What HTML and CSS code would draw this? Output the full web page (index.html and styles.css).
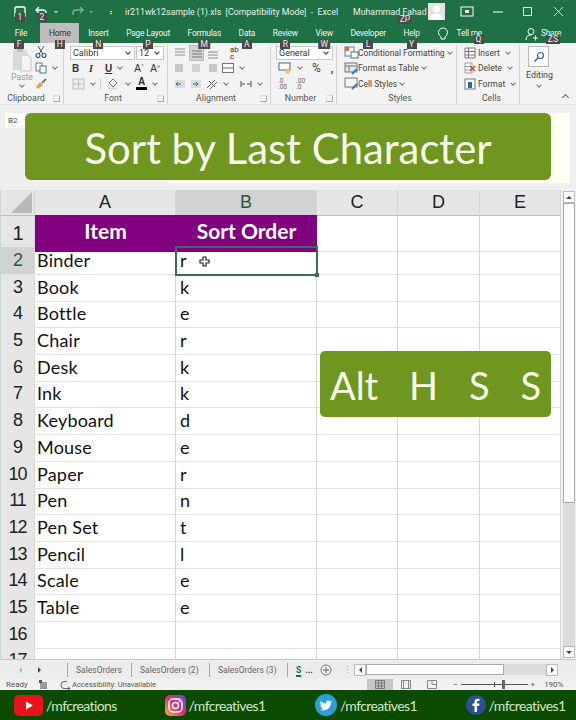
FILE: index.html
```html
<!DOCTYPE html>
<html lang="en">
<head>
  <meta charset="UTF-8" />
  <title>Sort by Last Character</title>
  <link rel="stylesheet" href="styles.css">
</head>
<body>

  <!-- title bar -->
  <div class="titlebar">
    <div class="qat">
      <span class="qat-btn"><svg width="14" height="14" viewBox="0 0 14 14"><path d="M2 12V3q0-1 1-1h8q1 0 1 1v9" fill="none" stroke="#fff" stroke-width="1.3"/></svg><i class="kt">1</i></span>
      <span class="qat-btn"><svg width="16" height="14" viewBox="0 0 16 14"><path d="M2 5h7q3 0 3 3v2M5 2L2 5l3 3" fill="none" stroke="#fff" stroke-width="1.4"/></svg><i class="kt">2</i></span>
      <span class="caret-w"></span>
      <span class="qat-btn dim"><svg width="16" height="14" viewBox="0 0 16 14"><path d="M14 5H7Q4 5 4 8v2M11 2l3 3-3 3" fill="none" stroke="#7fb096" stroke-width="1.4"/></svg></span>
      <span class="caret-w dim"></span>
      <span class="qat-more"></span>
    </div>
    <div class="doc-title">ir211wk12sample (1).xls&nbsp; [Compatibility Mode]&nbsp; -&nbsp; Excel</div>
    <div class="user">Muhammad Fahad<i class="kt">ZP</i></div>
    <div class="avatar"><svg width="17" height="17" viewBox="0 0 17 17"><rect width="17" height="17" fill="#e4e4e4"/><circle cx="8.5" cy="6" r="3.6" fill="#fff"/><path d="M2 17q0-6.500 6.500-6.500T15 17z" fill="#fff"/></svg></div>
    <div class="winbtns">
      <svg width="14" height="12" viewBox="0 0 14 12"><rect x="1" y="1" width="12" height="9" fill="none" stroke="#fff"/><rect x="5" y="4" width="4" height="3" fill="#fff"/></svg>
      <svg width="14" height="12" viewBox="0 0 14 12"><path d="M2 6h10" stroke="#fff"/></svg>
      <svg width="14" height="12" viewBox="0 0 14 12"><rect x="2.500" y="1.500" width="8" height="8" fill="none" stroke="#fff"/></svg>
      <svg width="14" height="12" viewBox="0 0 14 12"><path d="M2 1l9 9M11 1l-9 9" stroke="#fff"/></svg>
    </div>
  </div>

  <!-- tabs -->
  <div class="tabs">
    <div class="tab tab-file">File<i class="kt">F</i></div>
    <div class="tab active">Home<i class="kt">H</i></div>
    <div class="tab">Insert<i class="kt">N</i></div>
    <div class="tab">Page Layout<i class="kt">P</i></div>
    <div class="tab">Formulas<i class="kt">M</i></div>
    <div class="tab">Data<i class="kt">A</i></div>
    <div class="tab">Review<i class="kt">R</i></div>
    <div class="tab">View<i class="kt">W</i></div>
    <div class="tab">Developer<i class="kt">L</i></div>
    <div class="tab">Help<i class="kt">Y</i></div>
    <div class="tab tab-tell"><svg width="12" height="14" viewBox="0 0 12 14"><path d="M4 10Q1.500 8 1.500 5.500a4.500 4.500 0 0 1 9 0Q10.500 8 8 10v2H4z" fill="none" stroke="#fff"/></svg><span>Tell me</span><i class="kt kt-up">Q</i></div>
    <div class="tab tab-share"><svg width="13" height="14" viewBox="0 0 13 14"><circle cx="6" cy="4.500" r="3" fill="none" stroke="#fff"/><path d="M1 13q0-5 5-5M8 11h5M10.500 8.500v5" fill="none" stroke="#fff"/></svg><span>Share</span><i class="kt kt-up">ZS</i></div>
  </div>

  <!-- ribbon -->
  <div class="ribbon">
    <div class="group g-clip">
      <div class="g-body clip-body">
        <div class="paste">
          <svg width="20" height="25" viewBox="0 0 20 25"><rect x="1" y="3" width="14" height="20" fill="#d9d9d9"/><rect x="5" y="1" width="6" height="4" fill="#bdbdbd"/><path d="M9 8h7l3 3v13H9z" fill="#f4f4f4" stroke="#c4c4c4"/></svg>
          <span>Paste</span>
          <b class="chev"></b>
        </div>
        <div class="clip-col">
          <svg width="12" height="13" viewBox="0 0 12 13"><path d="M3 1l5 8M9 1L4 9" stroke="#555" fill="none"/><circle cx="3" cy="10.500" r="2" fill="none" stroke="#2b579a" stroke-width="1.200"/><circle cx="9" cy="10.500" r="2" fill="none" stroke="#2b579a" stroke-width="1.200"/></svg>
          <span class="inline"><svg width="12" height="12" viewBox="0 0 12 12"><rect x="1" y="1" width="6" height="8" fill="#fff" stroke="#777"/><rect x="5" y="4" width="6" height="7" fill="#fff" stroke="#3c7aa8"/></svg><b class="chev"></b></span>
          <svg width="12" height="12" viewBox="0 0 12 12"><path d="M7 5l4-4" stroke="#555" stroke-width="1.500"/><path d="M1 9l4-5 3 3-5 4z" fill="#d8a94a"/></svg>
        </div>
      </div>
      <div class="g-label lbl-l">Clipboard<i class="launcher"></i></div>
    </div>

    <div class="group g-font">
      <div class="g-body">
        <div class="r-row"><div class="combo c-font">Calibri<b class="chev dark"></b></div><div class="combo c-size">12<b class="chev dark"></b></div></div>
        <div class="r-row font-btns">
          <span class="fb bold">B</span><span class="fb ital">I</span><span class="fb under">U</span><b class="chev"></b>
          <span class="fb grow">A<sup>^</sup></span><span class="fb shrink">A<sup>v</sup></span>
        </div>
        <div class="r-row font-btns">
          <svg width="13" height="12" viewBox="0 0 13 12"><rect x="1" y="1" width="11" height="10" fill="#eee" stroke="#c2c2c2"/><path d="M6.500 1v10M1 6h11" stroke="#c2c2c2"/></svg><b class="chev"></b>
          <i class="vsep"></i>
          <svg width="13" height="13" viewBox="0 0 13 13"><path d="M2 6l4-4 4 4-4 4z" fill="#fff" stroke="#777"/><path d="M1 11.500h9" stroke="#d9d9d9" stroke-width="2"/></svg><b class="chev"></b>
          <span class="fcolor">A</span><b class="chev"></b>
        </div>
      </div>
      <div class="g-label lbl-l">Font<i class="launcher"></i></div>
    </div>

    <div class="group g-align">
      <div class="g-body">
        <div class="r-row al-row">
          <svg class="al" viewBox="0 0 14 12"><path d="M2 2h10M2 5h10M2 8h10" stroke="#8a8a8a"/></svg>
          <span class="al-on"><svg class="al" viewBox="0 0 14 12"><path d="M2 4h10M2 7h10M2 10h10" stroke="#7a7a7a"/></svg></span>
          <svg class="al" viewBox="0 0 14 12"><path d="M2 5h10M2 8h10M2 11h10" stroke="#8a8a8a"/></svg>
          <span class="abc">ab<br>c</span>
        </div>
        <div class="r-row al-row">
          <svg class="al" viewBox="0 0 14 12"><rect x="2" y="2" width="8" height="8" fill="#c8c8c8"/></svg>
          <svg class="al" viewBox="0 0 14 12"><rect x="3" y="2" width="8" height="8" fill="#d4d4d4"/></svg>
          <svg class="al" viewBox="0 0 14 12"><rect x="4" y="2" width="8" height="8" fill="#c8c8c8"/></svg>
          <span class="inline"><svg class="al" viewBox="0 0 14 12"><rect x="1.500" y="1.500" width="11" height="9" fill="#f8f8f8" stroke="#777"/><path d="M1.500 6h11" stroke="#777"/></svg><b class="chev"></b></span>
        </div>
        <div class="r-row al-row">
          <svg class="al" viewBox="0 0 14 12"><rect x="2" y="2" width="10" height="8" fill="#dcdcdc"/><path d="M8 6H3M5 4L3 6l2 2" fill="none" stroke="#2b6ca8"/></svg>
          <svg class="al" viewBox="0 0 14 12"><rect x="2" y="2" width="10" height="8" fill="#dcdcdc"/><path d="M4 6h5M7 4l2 2-2 2" fill="none" stroke="#2b6ca8"/></svg>
          <span class="inline"><svg class="al" viewBox="0 0 14 12"><path d="M2 10l8-8M5 11l7-7M4 3l6 6" stroke="#666" fill="none"/></svg><b class="chev"></b></span>
          <span class="inline"><svg class="al" viewBox="0 0 14 12"><path d="M2 3v6M12 3v6M3 6h3M11 6H8" stroke="#444" fill="none"/></svg><b class="chev"></b></span>
        </div>
      </div>
      <div class="g-label lbl-l">Alignment<i class="launcher"></i></div>
    </div>

    <div class="group g-num">
      <div class="g-body">
        <div class="r-row"><div class="combo c-num">General<b class="chev dark"></b></div></div>
        <div class="r-row num-row">
          <span class="inline"><svg width="14" height="12" viewBox="0 0 14 12"><rect x="1" y="1" width="11" height="7" fill="#fff" stroke="#3c6a8a"/><circle cx="10" cy="9.500" r="2.200" fill="#e8c46a"/></svg><b class="chev"></b></span>
          <span class="pct">%</span><span class="comma">,</span>
        </div>
        <div class="r-row num-row dec">
          <span>.0<br>.00</span><span>.00<br>.0</span>
        </div>
      </div>
      <div class="g-label lbl-l">Number<i class="launcher"></i></div>
    </div>

    <div class="group g-styles">
      <div class="g-body">
        <div class="lst"><svg width="15" height="13" viewBox="0 0 15 13"><rect x="1" y="1" width="9" height="9" fill="#fff" stroke="#777"/><rect x="1" y="1" width="4" height="4" fill="#d96b5a"/><rect x="7" y="6" width="7" height="6" fill="#fff" stroke="#3c7aa8"/></svg>Conditional Formatting<b class="chev"></b></div>
        <div class="lst"><svg width="15" height="13" viewBox="0 0 15 13"><rect x="1" y="1" width="12" height="9" fill="#dfe8f0" stroke="#777"/><path d="M1 4h12M5 4v6" stroke="#777"/><path d="M8 12l5-5" stroke="#3c7aa8" stroke-width="2"/></svg>Format as Table<b class="chev"></b></div>
        <div class="lst"><svg width="15" height="13" viewBox="0 0 15 13"><rect x="1" y="1" width="12" height="9" fill="#f4f4f4" stroke="#777"/><path d="M8 12l5-5" stroke="#3c7aa8" stroke-width="2"/></svg>Cell Styles<b class="chev"></b></div>
      </div>
      <div class="g-label">Styles</div>
    </div>

    <div class="group g-cells">
      <div class="g-body">
        <div class="lst"><svg width="12" height="12" viewBox="0 0 12 12"><path d="M1 1h10v10H1zM1 4.500h10M1 8h10M4.500 1v10" fill="#fff" stroke="#777"/></svg>Insert<b class="chev"></b></div>
        <div class="lst"><svg width="12" height="12" viewBox="0 0 12 12"><path d="M1 1h7v10H1zM1 4.500h7M1 8h7" fill="#fff" stroke="#999"/><path d="M6 4l5 5M11 4L6 9" stroke="#c8432f" stroke-width="1.300"/></svg>Delete<b class="chev"></b></div>
        <div class="lst"><svg width="12" height="12" viewBox="0 0 12 12"><rect x="1" y="1" width="10" height="10" fill="#fff" stroke="#777"/><rect x="4" y="4" width="4" height="6" fill="#2b6ca8"/></svg>Format<b class="chev"></b></div>
      </div>
      <div class="g-label">Cells</div>
    </div>

    <div class="group g-edit">
      <div class="edit-box"><svg width="12" height="12" viewBox="0 0 12 12"><circle cx="7.500" cy="4.500" r="3" fill="none" stroke="#2b6ca8" stroke-width="1.200"/><path d="M5 7l-3.500 3.500" stroke="#555" stroke-width="1.500"/></svg></div>
      <span class="edit-txt">Editing</span>
      <b class="chev"></b>
      <i class="collapse"></i>
    </div>
  </div>

  <!-- formula bar, mostly hidden by the banner -->
  <div class="formula">
    <div class="namebox">B2</div>
    <div class="fx-input"></div>
    <div class="banner">Sort by Last Character</div>
  </div>

  <!-- sheet -->
  <div class="sheet-wrap">
    <div class="sheet">
      <div class="row head"><div class="corner"></div><div>A</div><div class="sel-col">B</div><div>C</div><div>D</div><div>E</div></div>
      <div class="row first"><div class="num">1</div><div class="th">Item</div><div class="th">Sort Order</div><div></div><div></div><div></div></div>
      <div class="row"><div class="num sel-num">2</div><div>Binder</div>
        <div class="cur-cell">r
          <svg class="cursor" width="11" height="11" viewBox="0 0 11 11"><path d="M4 1h3v3h3v3H7v3H4V7H1V4h3z" fill="#fff" stroke="#222" stroke-width="1.200"/></svg>
          <i class="handle"></i>
        </div><div></div><div></div><div></div></div>
      <div class="row"><div class="num">3</div><div>Book</div><div>k</div><div></div><div></div><div></div></div>
      <div class="row"><div class="num">4</div><div>Bottle</div><div>e</div><div></div><div></div><div></div></div>
      <div class="row"><div class="num">5</div><div>Chair</div><div>r</div><div></div><div></div><div></div></div>
      <div class="row"><div class="num">6</div><div>Desk</div><div>k</div><div></div><div></div><div></div></div>
      <div class="row"><div class="num">7</div><div>Ink</div><div>k</div><div></div><div></div><div></div></div>
      <div class="row"><div class="num">8</div><div>Keyboard</div><div>d</div><div></div><div></div><div></div></div>
      <div class="row"><div class="num">9</div><div>Mouse</div><div>e</div><div></div><div></div><div></div></div>
      <div class="row"><div class="num">10</div><div>Paper</div><div>r</div><div></div><div></div><div></div></div>
      <div class="row"><div class="num">11</div><div>Pen</div><div>n</div><div></div><div></div><div></div></div>
      <div class="row"><div class="num">12</div><div>Pen Set</div><div>t</div><div></div><div></div><div></div></div>
      <div class="row"><div class="num">13</div><div>Pencil</div><div>l</div><div></div><div></div><div></div></div>
      <div class="row"><div class="num">14</div><div>Scale</div><div>e</div><div></div><div></div><div></div></div>
      <div class="row"><div class="num">15</div><div>Table</div><div>e</div><div></div><div></div><div></div></div>
      <div class="row"><div class="num">16</div><div></div><div></div><div></div><div></div><div></div></div>
      <div class="row"><div class="num">17</div><div></div><div></div><div></div><div></div><div></div></div>
    </div>
    <div class="vscroll">
      <div class="sb-btn"><b class="tri-up"></b></div>
      <div class="sb-thumb"></div>
      <div class="sb-track"></div>
      <div class="sb-btn"><b class="tri-down"></b></div>
    </div>
    <div class="keys"><span>Alt</span><span>H</span><span>S</span><span>S</span></div>
  </div>

  <!-- sheet tabs -->
  <div class="sheet-tabs">
    <div class="nav"><b class="tri-left"></b><b class="tri-right"></b></div>
    <div class="stab">SalesOrders</div>
    <div class="stab">SalesOrders (2)</div>
    <div class="stab">SalesOrders (3)</div>
    <div class="stab stab-cur"><u>S</u><span>...</span></div>
    <div class="add"><svg width="12" height="12" viewBox="0 0 12 12"><circle cx="6" cy="6" r="5" fill="none" stroke="#777"/><path d="M6 3v6M3 6h6" stroke="#666"/></svg></div>
    <div class="dots">⋮</div>
    <div class="hscroll">
      <div class="sb-btn"><b class="tri-left"></b></div>
      <div class="hs-thumb"></div>
      <div class="hs-track"></div>
      <div class="sb-btn"><b class="tri-right"></b></div>
    </div>
  </div>

  <!-- status bar -->
  <div class="status">
    <span class="ready">Ready</span>
    <svg class="st-macro" width="9" height="9" viewBox="0 0 9 9"><rect x="1" y="2" width="7" height="7" fill="#999"/><rect x="0" y="0" width="3" height="3" fill="#555"/></svg>
    <svg class="st-acc" width="11" height="10" viewBox="0 0 11 10"><path d="M7 1.500H4Q1 1.500 1 5t3 3.500M4 8.500h6M8 6.500l2 2-2 1.500" fill="none" stroke="#666"/></svg>
    <span class="acc">Accessibility: Unavailable</span>
    <div class="views">
      <span class="v-on"><svg width="10" height="9" viewBox="0 0 10 9"><path d="M.5.500h9v8h-9zM.5 3h9M.5 6h9M3.500.500v8M6.500.500v8" fill="none" stroke="#777"/></svg></span>
      <span><svg width="10" height="9" viewBox="0 0 10 9"><rect x=".5" y=".5" width="9" height="8" fill="none" stroke="#888"/><rect x="2.500" y=".5" width="5" height="8" fill="none" stroke="#888"/></svg></span>
      <span><svg width="10" height="9" viewBox="0 0 10 9"><path d="M.5.500h9v8h-9zM5 .5v4h4" fill="none" stroke="#888"/></svg></span>
    </div>
    <div class="zoom"><span>−</span><div class="slider"><i class="tick"></i><i class="thumb"></i></div><span>+</span></div>
    <span class="pctz">190%</span>
  </div>

  <!-- social strip -->
  <div class="social">
    <div class="soc">
      <svg class="yt" width="29" height="21" viewBox="0 0 29 21"><rect width="29" height="21" rx="5" fill="#e8141b"/><path d="M12 6.500l7 4-7 4z" fill="#fff"/></svg>
      <span>/mfcreations</span>
    </div>
    <div class="soc">
      <svg width="21" height="21" viewBox="0 0 21 21"><defs><linearGradient id="ig" x1="0" y1="1" x2="1" y2="0"><stop offset="0" stop-color="#fdb53c"/><stop offset=".5" stop-color="#d62f7f"/><stop offset="1" stop-color="#5b4fc4"/></linearGradient></defs><rect width="21" height="21" rx="5" fill="url(#ig)"/><rect x="4" y="4" width="13" height="13" rx="4" fill="none" stroke="#fff" stroke-width="1.500"/><circle cx="10.500" cy="10.500" r="3" fill="none" stroke="#fff" stroke-width="1.500"/><circle cx="14.500" cy="6.500" r="1" fill="#fff"/></svg>
      <span>/mfcreatives1</span>
    </div>
    <div class="soc">
      <svg width="22" height="22" viewBox="0 0 22 22"><circle cx="11" cy="11" r="11" fill="#2a9fdc"/><path d="M5 15.500q3 1.500 6 .5 5-2 5-7.500l1.500-1.500-2 .5q-1-1.500-3-1-2 .8-1.500 3-3 0-5.500-2.500-1 2.500 1 4l-1.500-.3q.2 2 2.500 2.800l-1.500.1q.8 1.500 2.500 1.500-1.500 1-3.500.9z" fill="#fff"/></svg>
      <span>/mfcreatives1</span>
    </div>
    <div class="soc">
      <svg width="20" height="20" viewBox="0 0 20 20"><circle cx="10" cy="10" r="10" fill="#2d4f96"/><path d="M11 17v-6h2.200l.3-2.500H11V7q0-1 1.100-1h1.400V3.700h-2Q8.500 3.700 8.500 6.700v1.800H6.500V11h2v6z" fill="#fff"/></svg>
      <span>/mfcreatives1</span>
    </div>
  </div>

</body>
</html>
```

FILE: styles.css
```css
html, body {
  margin: 0;
  padding: 0;
  width: 576px;
  height: 720px;
  overflow: hidden;
}
body {
  display: flex;
  flex-direction: column;
  font-family: 'Roboto', 'Liberation Sans', sans-serif;
  background: #f3f3f3;
  color: #444;
}
i, b { font-style: normal; }

/* keytips */
.kt {
  position: absolute;
  left: 50%;
  top: 16px;
  transform: translateX(-50%);
  background: #4a4a4a;
  color: #eee;
  font-size: 8.500px;
  letter-spacing: 0;
  line-height: 9px;
  padding: 0 2px;
  min-width: 6px;
  height: 9px;
  text-align: center;
  z-index: 5;
}
.tab .kt-up { top: 11px; }
.qat .kt { top: 8px; }

/* title bar */
.titlebar {
  height: 24px;
  flex: none;
  background: #1f7145;
  color: #e6f0ea;
  display: flex;
  align-items: center;
  font-size: 8.800px;
}
.qat {
  display: flex;
  align-items: center;
  padding-left: 13px;
  width: 112px;
  flex: none;
  box-sizing: border-box;
}
.qat-btn {
  position: relative;
  display: flex;
  margin-right: 4px;
}
.qat-btn:first-child { margin-right: 7px; }
.caret-w {
  width: 0;
  height: 0;
  border: 2px solid transparent;
  border-top: 2px solid #fff;
  margin: 2px 11px 0 0;
}
.caret-w.dim { border-top-color: #7fb096; margin-right: 17px; }
.qat-more {
  width: 4px;
  height: 1px;
  border-top: 1px solid #fff;
  border-bottom: 1px solid #fff;
}
.doc-title { width: 241px; flex: none; padding-left: 13px; box-sizing: border-box; white-space: nowrap; }
.user { position: relative; width: 75px; flex: none; white-space: nowrap; }
.user .kt { left: 52px; top: 8px; }
.avatar { display: flex; flex: none; margin: 0 0 2px; }
.winbtns {
  display: flex;
  align-items: center;
  justify-content: space-between;
  flex: 1;
  padding: 0 10px 0 15px;
}

/* tabs */
.tabs {
  height: 19px;
  flex: none;
  background: #1f7145;
  color: #eef5f0;
  display: flex;
  padding-left: 6px;
  font-size: 8.400px;
  letter-spacing: -.2px;
}
.tab {
  position: relative;
  padding: 0 8.800px;
  line-height: 19px;
  white-space: nowrap;
}
.tab-file { padding-right: 5px; margin-right: 8px; }
.tab.active {
  background: #bdbdbd;
  color: #333;
  margin-top: -1px;
  line-height: 20px;
}
.tab.active .kt { top: 17px; }
.tab-tell {
  display: flex;
  align-items: center;
  gap: 8px;
  padding-left: 8px;
}
.tab-tell .kt { left: 50px; }
.tab-share {
  display: flex;
  align-items: center;
  gap: 3px;
  margin-left: 34px;
  padding: 0;
}
.tab-share .kt { left: 28px; }

/* ribbon */
.ribbon {
  height: 62px;
  flex: none;
  display: flex;
  background: #f3f3f3;
  border-bottom: 1px solid #e0e0e0;
  box-sizing: border-box;
  font-size: 8.500px;
}
.group {
  position: relative;
  display: flex;
  flex-direction: column;
  border-right: 1px solid #d4d4d4;
  box-sizing: border-box;
  margin-top: 2px;
  height: 59px;
  flex: none;
}
.g-body { flex: 1; display: flex; flex-direction: column; min-height: 0; }
.g-label {
  position: relative;
  text-align: center;
  height: 12px;
  line-height: 12px;
  color: #555;
  font-size: 8.800px;
  flex: none;
}
.lbl-l { padding-right: 11px; }
.launcher {
  position: absolute;
  right: 3px;
  top: 3px;
  width: 5px;
  height: 5px;
  border: 1px solid #aaa;
  border-top-color: #ddd;
  border-left-color: #ddd;
}
.chev {
  display: inline-block;
  width: 3px;
  height: 3px;
  border-right: 1px solid #777;
  border-bottom: 1px solid #777;
  transform: rotate(45deg);
  margin: 0 0 2px 6px;
  flex: none;
}
.chev.dark { border-color: #333; }
.inline { display: inline-flex; align-items: center; }
.r-row { display: flex; align-items: center; height: 15.500px; flex: none; }

.g-clip { width: 64px; }
.clip-body { flex-direction: row; padding-left: 11px; }
.paste {
  display: flex;
  flex-direction: column;
  align-items: center;
  width: 22px;
  color: #9a9a9a;
  font-size: 8.500px;
  line-height: 11px;
}
.paste svg { margin-top: 2px; }
.paste .chev { margin: 0; }
.clip-col {
  display: flex;
  flex-direction: column;
  justify-content: space-between;
  align-items: flex-start;
  padding: 0 0 0 2px;
  height: 45px;
}

.g-font { width: 104px; padding-left: 6px; }
.combo {
  display: flex;
  align-items: center;
  justify-content: space-between;
  background: #fff;
  border: 1px solid #c8c8c8;
  height: 14px;
  box-sizing: border-box;
  padding: 0 4px 0 2px;
  color: #333;
  font-size: 9px;
}
.c-font { width: 65px; }
.c-size { width: 28px; margin-left: 1px; }
.font-btns { padding-left: 2px; }
.fb { font-family: 'Liberation Serif', serif; font-size: 10px; color: #333; }
.bold { font-family: 'Liberation Sans', sans-serif; font-weight: bold; width: 17px; }
.ital { font-style: italic; font-weight: bold; width: 16px; }
.under { font-family: 'Liberation Sans', sans-serif; text-decoration: underline; font-weight: bold; }
.grow, .shrink { font-family: 'Liberation Sans', sans-serif; width: 16px; font-size: 10px; }
.grow { margin-left: 12px; }
.fb sup { font-size: 6px; line-height: 0; color: #666; }
.vsep { width: 1px; height: 12px; background: #d0d0d0; margin: 0 6px 0 5px; }
.fcolor {
  margin-left: 6px;
  font-family: 'Liberation Sans', sans-serif;
  font-weight: bold;
  font-size: 10px;
  line-height: 10px;
  color: #333;
  border-bottom: 3px solid #000;
  padding: 0 2px;
}

.g-align { width: 103px; padding-left: 5px; }
.al { width: 14px; height: 12px; flex: none; }
.al-row { gap: 2px; }
.al-row > * { flex: none; }
.al-on {
  display: flex;
  align-items: center;
  justify-content: center;
  width: 15px;
  height: 16px;
  background: #d2d2d2;
  border: 1px solid #bbb;
  box-sizing: border-box;
}
.abc { font-size: 8px; line-height: 7px; margin-left: 8px; color: #333; }
.al-row .chev { margin-left: 5px; }
.al-row:last-child .inline:last-child { margin-left: 9px; }

.g-num { width: 66px; padding-left: 5px; }
.c-num { width: 57px; }
.num-row { gap: 7px; padding-left: 2px; }
.pct { font-size: 12px; color: #444; margin-left: 3px; }
.comma { font-weight: bold; font-size: 11px; color: #444; margin-left: 3px; }
.dec span { font-size: 6.500px; line-height: 6px; color: #666; margin-right: 2px; }

.g-styles { width: 120px; padding-left: 7px; }
.lst {
  position: relative;
  display: flex;
  align-items: center;
  height: 15.500px;
  gap: 0;
  color: #444;
  white-space: nowrap;
  flex: none;
}
.lst .chev { margin-left: 3px; }
.g-styles .lst svg { margin-right: -1px; }

.g-cells { width: 63px; padding-left: 7px; }
.g-cells .lst { gap: 2px; }
.g-cells .lst .chev { margin-left: 4px; }

.g-edit {
  flex: 1;
  border-right: none;
  align-items: flex-start;
  padding-left: 8px;
}
.edit-box {
  display: flex;
  align-items: center;
  justify-content: center;
  width: 21px;
  height: 21px;
  background: #fbfbfb;
  border: 1px solid #b8b8b8;
  box-sizing: border-box;
  margin-top: 1px;
}
.edit-txt { margin: 3px 0 0 -2px; font-size: 8.800px; color: #444; }
.g-edit .chev { margin: 3px 0 0 9px; }
.collapse {
  position: absolute;
  right: 8px;
  bottom: 4px;
  width: 4px;
  height: 4px;
  border-left: 1px solid #666;
  border-top: 1px solid #666;
  transform: rotate(45deg);
}

/* formula bar */
.formula {
  position: relative;
  height: 85px;
  flex: none;
  background: #efefef;
}
.namebox {
  position: absolute;
  left: 5px;
  top: 8px;
  width: 20px;
  height: 15px;
  background: #fff;
  font-size: 8px;
  line-height: 15px;
  padding-left: 3px;
  box-sizing: border-box;
  color: #555;
}
.fx-input {
  position: absolute;
  left: 168px;
  right: 6px;
  top: 8px;
  height: 70px;
  background: #fffef2;
}
.banner {
  position: absolute;
  left: 25px;
  top: 8px;
  width: 526px;
  height: 67px;
  background: #6f971f;
  border-radius: 6px;
  color: #f7fbe9;
  font-family: 'Lato', sans-serif;
  font-size: 41.800px;
  line-height: 71px;
  text-align: center;
}

/* sheet */
.sheet-wrap {
  position: relative;
  height: 469px;
  flex: none;
  display: flex;
  background: #f0f0f0;
  overflow: hidden;
  border-left: 1px solid #c8d8d0;
  box-sizing: border-box;
}
.sheet { width: 560px; flex: none; background: #fff; }
.row {
  display: grid;
  grid-template-columns: 34px 141px 141px 81px 82px 81px;
  height: 26.700px;
  font-family: 'Lato', sans-serif;
  font-size: 18px;
  letter-spacing: .2px;
  color: #111;
}
.row > div {
  border-right: 1px solid #d6d6d6;
  border-bottom: 1px solid #e2e2e2;
  line-height: 27px;
  padding-left: 2px;
  box-sizing: border-box;
}
.row > div:nth-child(3) { padding-left: 4px; }
.row .num {
  background: #e6e6e6;
  font-family: 'Liberation Sans', sans-serif;
  font-size: 18px;
  text-align: center;
  padding: 0;
  letter-spacing: -1px;
  line-height: 27px;
  border-bottom-color: #cfcfcf;
  color: #222;
}
.row .sel-num { background: #d2d2d2; color: #1f5a44; }
.head { height: 25px; }
.row.head > div {
  background: #e6e6e6;
  font-family: 'Liberation Sans', sans-serif;
  text-align: center;
  padding: 0;
  border-bottom-color: #bdbdbd;
  line-height: 25px;
  font-size: 18px;
  color: #222;
}
.row.head .sel-col { background: #d2d2d2; color: #1f5a44; }
.head .corner { position: relative; }
.corner::after {
  content: '';
  position: absolute;
  right: 2px;
  bottom: 2px;
  border: 0 solid transparent;
  border-width: 0 0 21px 21px;
  border-bottom-color: #b8b8b8;
}
.first { height: 32px; }
.row.first > div { line-height: 32px; }
.row.first .th {
  background: #800080;
  color: #fff;
  font-weight: bold;
  font-size: 21px;
  letter-spacing: 0;
  text-align: center;
  padding: 0;
  border: none;
}
.row.first .num { line-height: 36px; font-size: 20px; }
.row .cur-cell {
  position: relative;
  outline: 2px solid #3f6b5c;
  outline-offset: -1px;
  z-index: 2;
}
.cursor { position: absolute; left: 23px; top: 9px; }
.handle {
  position: absolute;
  right: -3px;
  bottom: -3px;
  width: 4px;
  height: 4px;
  background: #3f6b5c;
}

.keys {
  position: absolute;
  left: 319px;
  top: 161px;
  width: 231px;
  height: 66px;
  box-sizing: border-box;
  padding: 0 10px;
  background: #6f971f;
  border-radius: 5px;
  color: #f7fbe9;
  font-family: 'Lato', sans-serif;
  font-size: 38px;
  line-height: 68px;
  display: flex;
  justify-content: space-between;
  z-index: 4;
}

/* scroll bars */
.vscroll {
  flex: 1;
  display: flex;
  flex-direction: column;
  align-items: center;
  padding: 1px 0;
}
.sb-btn {
  display: flex;
  align-items: center;
  justify-content: center;
  width: 10px;
  height: 10px;
  background: #fff;
  border: 1px solid #bbb;
  flex: none;
}
.sb-thumb {
  width: 10px;
  height: 298px;
  background: #fff;
  border: 1px solid #aaa;
  flex: none;
}
.sb-track { flex: 1; width: 12px; background: #dcdcdc; }
.tri-up, .tri-down, .tri-left, .tri-right {
  width: 0;
  height: 0;
  border: 3px solid transparent;
}
.tri-up { border-bottom-color: #444; margin-bottom: 3px; }
.tri-down { border-top-color: #444; margin-top: 3px; }
.tri-left { border-right-color: #444; margin-right: 3px; }
.tri-right { border-left-color: #444; margin-left: 3px; }

/* sheet tabs */
.sheet-tabs {
  height: 20px;
  flex: none;
  display: flex;
  align-items: center;
  background: #ececec;
  border-top: 1px solid #c8c8c8;
  box-sizing: border-box;
  font-size: 8.500px;
  color: #666;
}
.nav {
  width: 67px;
  flex: none;
  box-sizing: border-box;
  padding-left: 16px;
  display: flex;
  gap: 10px;
}
.nav .tri-left { border-right-color: #bbb; }
.stab {
  border-left: 1px solid #aaa;
  width: 78px;
  box-sizing: border-box;
  height: 14px;
  line-height: 14px;
  padding: 0 0 0 8px;
  white-space: nowrap;
}
.stab:nth-child(2) { width: 64px; }
.stab-cur {
  display: flex;
  gap: 4px;
  width: 30px;
  color: #1f7145;
  font-weight: bold;
}
.stab-cur u { text-decoration-thickness: 2px; text-underline-offset: 2px; }
.stab-cur span { color: #333; }
.add { display: flex; margin-left: 3px; }
.dots { margin-left: 11px; color: #aaa; width: 11px; }
.hscroll {
  display: flex;
  align-items: center;
  width: 204px;
  flex: none;
}
.hs-thumb { width: 136px; height: 9px; background: #fff; border: 1px solid #aaa; flex: none; }
.hs-track { flex: 1; height: 11px; background: #dcdcdc; }

/* status */
.status {
  height: 11px;
  flex: none;
  display: flex;
  align-items: center;
  background: #f1f1f1;
  font-size: 8px;
  color: #555;
  line-height: 11px;
  position: relative;
}
.ready { margin-left: 6px; width: 33px; }
.st-macro { margin-right: 12px; }
.st-acc { margin-right: 1px; }
.acc { width: 295px; white-space: nowrap; font-size: 7.500px; }
.views { display: flex; flex: none; margin-right: 8px; }
.views span {
  display: flex;
  align-items: center;
  justify-content: center;
  width: 26px;
  height: 11px;
}
.views .v-on { background: #c6c6c6; }
.zoom { display: flex; align-items: center; gap: 3px; }
.slider { position: relative; width: 67px; height: 1px; background: #555; }
.tick { position: absolute; left: 33px; top: -2px; width: 1px; height: 5px; background: #555; }
.thumb { position: absolute; left: 41px; top: -4px; width: 3px; height: 9px; background: #666; }
.pctz { margin-left: 9px; }

/* social strip */
.social {
  height: 30px;
  flex: none;
  display: grid;
  grid-template-columns: 150.500px 150.500px 150.500px 1fr;
  padding-left: 14px;
  background: #0b4b00;
  color: #cfe9c8;
  font-family: 'Lato', sans-serif;
  font-size: 14px;
  letter-spacing: -.6px;
}
.soc { display: flex; align-items: center; gap: 3px; }
.soc svg { flex: none; }
```
